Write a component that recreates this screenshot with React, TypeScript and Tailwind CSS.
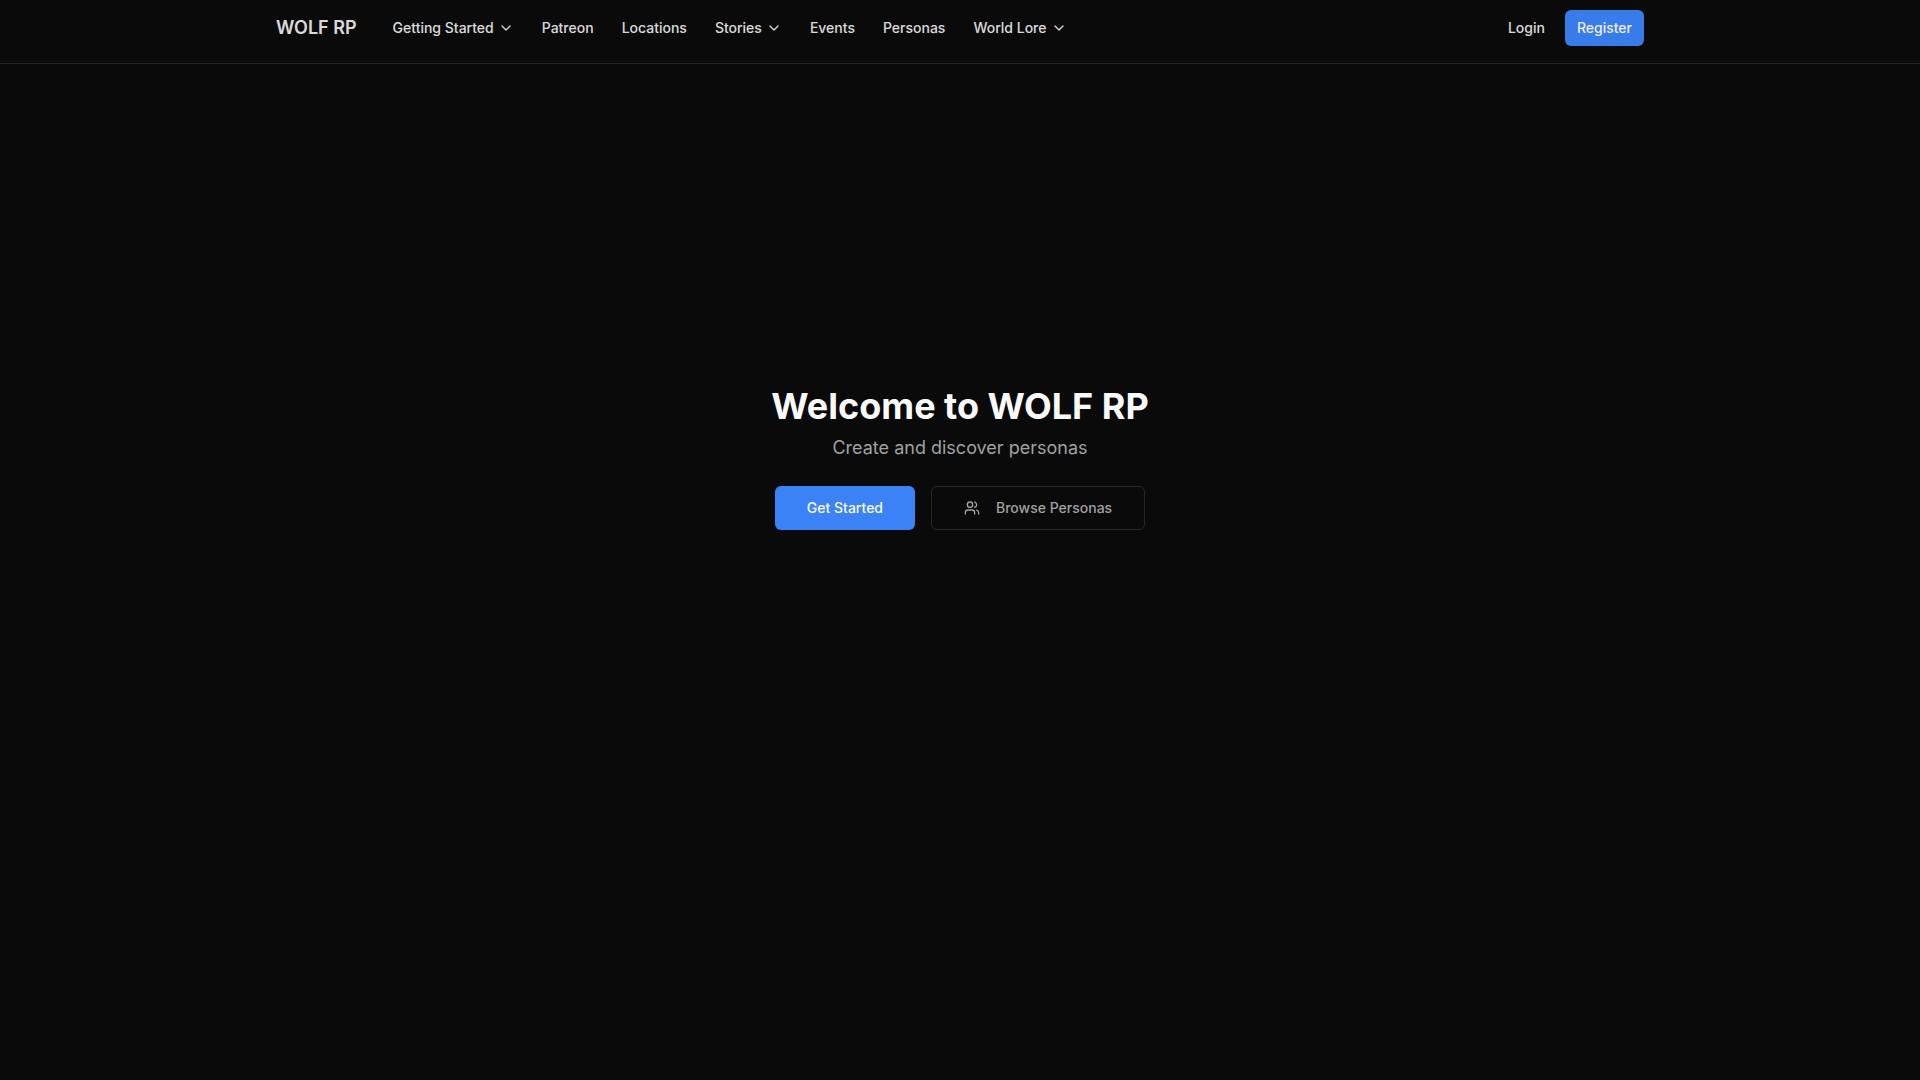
import { ChevronDown, Users } from "lucide-react";

const links = [
  { label: "Getting Started", menu: true },
  { label: "Patreon" },
  { label: "Locations" },
  { label: "Stories", menu: true },
  { label: "Events" },
  { label: "Personas" },
  { label: "World Lore", menu: true },
];

export default function App() {
  return (
    <div className="flex min-h-screen flex-col bg-[#0a0a0a] font-['Inter',sans-serif] text-sm font-medium">
      <header className="border-b border-[#262626] text-[#e5e5e5] opacity-95">
        <div className="mx-auto flex h-[63px] max-w-[1400px] items-start justify-between px-4 pt-[10px]">
          <nav className="flex h-9 items-center gap-1">
            <a href="#" className="mr-5 text-lg font-semibold">WOLF RP</a>
            {links.map((l) =>
              l.menu ? (
                <button key={l.label} className="flex items-center gap-1 px-3">
                  {l.label}
                  <ChevronDown className="size-4" />
                </button>
              ) : (
                <a key={l.label} href="#" className="px-3">{l.label}</a>
              )
            )}
          </nav>
          <div className="flex items-center gap-2">
            <a href="#" className="px-3">Login</a>
            <a href="#" className="flex h-9 items-center rounded-md bg-[#3b82f6] px-3 text-[#fafafa]">Register</a>
          </div>
        </div>
      </header>
      <main className="flex flex-col items-center pt-[322px]">
        <h1 className="text-4xl font-bold text-[#fafafa]">Welcome to WOLF RP</h1>
        <p className="mt-2 text-lg font-normal text-[#a1a1a1]">Create and discover personas</p>
        <div className="mt-6 flex gap-4">
          <a href="#" className="flex h-11 items-center rounded-md bg-[#3b82f6] px-8 text-[#fafafa]">Get Started</a>
          <a href="#" className="flex h-11 items-center gap-4 rounded-md border border-[#262626] px-8 text-[#a1a1a1]">
            <Users className="size-4" />
            Browse Personas
          </a>
        </div>
      </main>
    </div>
  );
}
